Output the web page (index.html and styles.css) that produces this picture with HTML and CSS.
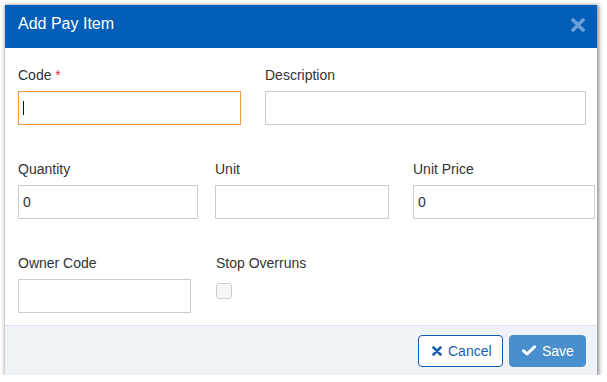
FILE: index.html
```html
<!DOCTYPE html>
<html>
<head>
<meta charset="utf-8">
<title>Add Pay Item</title>
<link rel="stylesheet" href="styles.css">
</head>
<body>
<div class="dialog">
  <div class="dialog-header">
    <span class="dialog-title">Add Pay Item</span>
    <svg class="close-icon" width="14" height="14" viewBox="0 0 14 14"><path d="M2 2 L12 12 M12 2 L2 12" stroke="currentColor" stroke-width="3.6" stroke-linecap="round"/></svg>
  </div>
  <div class="dialog-body">
    <div class="row row-1">
      <div class="field f-code">
        <label class="label">Code <span class="req">*</span></label>
        <div class="input-wrap">
          <input class="input input-focus" type="text" value="">
          <span class="caret"></span>
        </div>
      </div>
      <div class="field f-desc">
        <label class="label">Description</label>
        <input class="input" type="text" value="">
      </div>
    </div>
    <div class="row row-2">
      <div class="field f-qty">
        <label class="label">Quantity</label>
        <input class="input" type="text" value="0">
      </div>
      <div class="field f-unit">
        <label class="label">Unit</label>
        <input class="input" type="text" value="">
      </div>
      <div class="field f-price">
        <label class="label">Unit Price</label>
        <input class="input" type="text" value="0">
      </div>
    </div>
    <div class="row row-3">
      <div class="field f-owner">
        <label class="label">Owner Code</label>
        <input class="input" type="text" value="">
      </div>
      <div class="field f-stop">
        <label class="label">Stop Overruns</label>
        <span class="checkbox"></span>
      </div>
    </div>
  </div>
  <div class="dialog-footer">
    <button class="btn btn-cancel">
      <svg class="btn-icon" width="10" height="10" viewBox="0 0 10 10"><path d="M1.5 1.5 L8.5 8.5 M8.5 1.5 L1.5 8.5" stroke="currentColor" stroke-width="2.6" stroke-linecap="round"/></svg>
      Cancel
    </button>
    <button class="btn btn-save">
      <svg class="btn-icon" width="14" height="11" viewBox="0 0 14 11"><path d="M1.5 5.8 L5 9 L12.5 1.8" fill="none" stroke="currentColor" stroke-width="3" stroke-linecap="round" stroke-linejoin="round"/></svg>
      Save
    </button>
  </div>
</div>
</body>
</html>
```

FILE: styles.css
```css
html, body {
  margin: 0;
  padding: 0;
  background: #ffffff;
}
body {
  padding: 5px 0 0 5px;
  font-family: "Liberation Sans", Arial, sans-serif;
  color: #333333;
}
.dialog {
  width: 592px;
  height: 370px;
  background: #ffffff;
  display: flex;
  flex-direction: column;
  box-shadow: 1px 1px 4px 1px rgba(0, 0, 0, 0.45);
}
.dialog-header {
  height: 43px;
  flex-shrink: 0;
  background: #035eb7;
  display: flex;
  align-items: center;
  justify-content: space-between;
  padding: 0 12px 0 13px;
  box-sizing: border-box;
}
.dialog-title {
  color: #ffffff;
  font-size: 16px;
  margin-top: -5px;
}
.close-icon {
  color: #6f9fd6;
  margin-top: -4px;
}
.dialog-body {
  flex: 1;
  padding: 17px 0 0 13px;
  display: flex;
  flex-direction: column;
  gap: 34px;
}
.row {
  display: flex;
}
.field {
  display: flex;
  flex-direction: column;
  flex-shrink: 0;
}
.label {
  font-size: 14px;
  line-height: 20px;
  height: 20px;
  margin-bottom: 6px;
  color: #333333;
}
.req {
  color: #e8274a;
}
.input {
  box-sizing: border-box;
  height: 34px;
  width: 100%;
  margin: 0;
  border: 1px solid #cccccc;
  padding: 0 4px;
  font-family: "Liberation Sans", Arial, sans-serif;
  font-size: 14px;
  color: #333333;
  background: #ffffff;
  outline: none;
}
.input-focus {
  border-color: #f29a3a;
}
.input-wrap {
  position: relative;
}
.caret {
  position: absolute;
  left: 5px;
  top: 10px;
  width: 1px;
  height: 14px;
  background: #111111;
}
.f-code { width: 223px; }
.f-desc { width: 321px; margin-left: 24px; }
.f-qty { width: 180px; }
.f-unit { width: 174px; margin-left: 17px; }
.f-price { width: 182px; margin-left: 24px; }
.f-owner { width: 173px; }
.f-stop { margin-left: 25px; }
.checkbox {
  display: block;
  box-sizing: border-box;
  width: 16px;
  height: 16px;
  margin-top: 4px;
  border: 1px solid #cfcfcf;
  border-radius: 3px;
  background: #f6f6f6;
}
.dialog-footer {
  height: 50px;
  flex-shrink: 0;
  box-sizing: border-box;
  border-top: 1px solid #dfe3ea;
  background: #eff2f7;
  display: flex;
  justify-content: flex-end;
  align-items: center;
  gap: 6px;
  padding: 0 11px 0 0;
}
.btn {
  height: 32px;
  box-sizing: border-box;
  border-radius: 4px;
  font-family: "Liberation Sans", Arial, sans-serif;
  font-size: 14px;
  display: flex;
  align-items: center;
  gap: 6px;
  padding: 0;
  cursor: pointer;
}
.btn-cancel {
  width: 85px;
  background: #ffffff;
  border: 1px solid #0b5fb3;
  color: #1b5fb0;
  padding-left: 13px;
}
.btn-save {
  width: 77px;
  background: #4a8fcd;
  border: 1px solid #4a8fcd;
  color: #ffffff;
  padding-left: 12px;
}
```
